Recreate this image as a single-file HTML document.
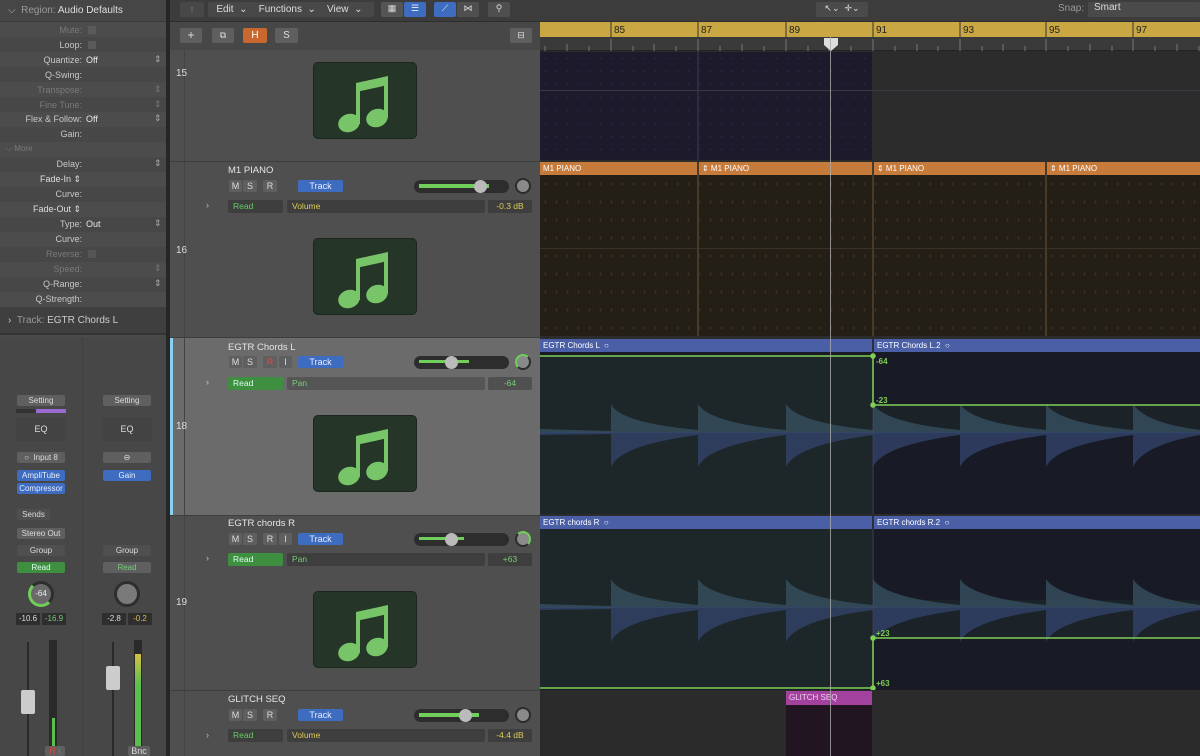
<!DOCTYPE html><html><head><meta charset="utf-8"><style>
*{margin:0;padding:0;box-sizing:border-box}
html,body{width:1200px;height:756px;overflow:hidden}
body{background:#4d4d4d;font-family:"Liberation Sans",sans-serif;font-size:9px;color:#ddd;position:relative}
.a{position:absolute}
.lbl{position:absolute;right:1118px;text-align:right;white-space:nowrap;color:#c8c8c8}
.dim{color:#7a7a7a}
.val{position:absolute;left:86px;color:#e8e8e8}
.btn{position:absolute;background:#5f5f5f;border-radius:2px;color:#ddd;text-align:center;font-size:9px;line-height:12px}
.bl{background:#3d6cc0;color:#e8eefc}
.gr{background:#3f8f41;color:#dfe}
.dd{position:absolute;background:#3e3e3e;border-radius:2px;line-height:13px;font-size:8.5px;padding-left:5px}
.dd.gr{background:#3f8f41;color:#dfe}
.nm{position:absolute;left:228px;font-size:9.5px;color:#e6e6e6}
.icon{position:absolute;left:313px;width:104px;height:77px;background:#253527;border-radius:5px;border:1px solid #1c261d}
.tn{position:absolute;left:176px;font-size:10px;color:#ddd}
.sl{position:absolute;left:414px;width:95px;height:13px;background:#2d2d2d;border-radius:7px}
.kn{position:absolute;left:515px;width:16px;height:16px;border-radius:50%;background:#8a8a8a;border:2px solid #2c2c2c}
.rh{position:absolute;height:13px;font-size:8px;line-height:13px;padding-left:3px;white-space:nowrap;overflow:hidden}
</style></head><body>
<div class="a" style="left:0;top:0;width:167px;height:337px;background:#4a4a4a"></div>
<div class="a" style="left:0;top:0;width:167px;height:22px;background:#464646;border-bottom:1px solid #3a3a3a"></div>
<div class="a" style="left:8px;top:5px;font-size:10px;color:#bbb">⌵ &nbsp;<span style="color:#999">Region:</span> <span style="color:#ddd">Audio Defaults</span></div>
<div class="a" style="left:0;top:22px;width:167px;height:285px;background:repeating-linear-gradient(#4c4c4c 0 15px,#474747 15px 30px)"></div>
<div class="lbl dim" style="top:25px">Mute:</div><div class="a" style="left:88px;top:26px;width:8px;height:8px;background:#5a5a5a"></div>
<div class="lbl" style="top:40px">Loop:</div><div class="a" style="left:88px;top:41px;width:8px;height:8px;background:#5a5a5a"></div>
<div class="lbl" style="top:55px">Quantize:</div><div class="val" style="top:55px">Off</div>
<div class="lbl" style="top:70px">Q-Swing:</div>
<div class="lbl dim" style="top:85px">Transpose:</div>
<div class="lbl dim" style="top:100px">Fine Tune:</div>
<div class="lbl" style="top:114px">Flex &amp; Follow:</div><div class="val" style="top:114px">Off</div>
<div class="lbl" style="top:129px">Gain:</div>
<div class="a dim" style="left:6px;top:144px;font-size:8px">⌵ More</div>
<div class="lbl" style="top:159px">Delay:</div>
<div class="a" style="left:40px;top:174px">Fade-In ⇕</div>
<div class="lbl" style="top:189px">Curve:</div>
<div class="a" style="left:33px;top:204px">Fade-Out ⇕</div>
<div class="lbl" style="top:219px">Type:</div><div class="val" style="top:219px">Out</div>
<div class="lbl" style="top:234px">Curve:</div>
<div class="lbl dim" style="top:249px">Reverse:</div><div class="a" style="left:88px;top:250px;width:8px;height:8px;background:#555"></div>
<div class="lbl dim" style="top:264px">Speed:</div>
<div class="lbl" style="top:279px">Q-Range:</div>
<div class="lbl" style="top:294px">Q-Strength:</div>
<div class="a" style="left:154px;top:54px;color:#aaa">⇕</div><div class="a" style="left:154px;top:84px;color:#777">⇕</div><div class="a" style="left:154px;top:99px;color:#777">⇕</div><div class="a" style="left:154px;top:113px;color:#aaa">⇕</div><div class="a" style="left:154px;top:158px;color:#aaa">⇕</div><div class="a" style="left:154px;top:218px;color:#aaa">⇕</div><div class="a" style="left:154px;top:263px;color:#777">⇕</div><div class="a" style="left:154px;top:278px;color:#aaa">⇕</div>
<div class="a" style="left:0;top:307px;width:167px;height:28px;background:#3f3f3f;border-bottom:2px solid #333"></div>
<div class="a" style="left:8px;top:315px;font-size:10px;color:#ccc">›&nbsp;&nbsp;<span style="color:#999">Track:</span> EGTR Chords L</div>
<div class="a" style="left:0;top:337px;width:167px;height:419px;background:#474747"></div>
<div class="a" style="left:82px;top:337px;width:1px;height:419px;background:#414141"></div>
<div class="btn" style="left:17px;top:395px;width:48px;height:11px;line-height:11px;font-size:8px">Setting</div>
<div class="btn" style="left:103px;top:395px;width:48px;height:11px;line-height:11px;font-size:8px">Setting</div>
<div class="a" style="left:16px;top:409px;width:50px;height:4px;background:#333"><div style="margin-left:20px;height:4px;background:#9a6ad0"></div></div>
<div class="btn" style="left:16px;top:417px;width:50px;height:24px;line-height:24px;background:#434343">EQ</div>
<div class="btn" style="left:102px;top:417px;width:50px;height:24px;line-height:24px;background:#434343">EQ</div>
<div class="btn" style="left:17px;top:452px;width:48px;height:11px;line-height:11px;font-size:8px">○ &nbsp;Input 8</div>
<div class="btn" style="left:103px;top:452px;width:48px;height:11px;line-height:11px;font-size:8px">⊖</div>
<div class="btn bl" style="left:17px;top:470px;width:48px;height:11px;line-height:11px;font-size:8px">AmpliTube</div>
<div class="btn bl" style="left:17px;top:483px;width:48px;height:11px;line-height:11px;font-size:8px">Compressor</div>
<div class="btn bl" style="left:103px;top:470px;width:48px;height:11px;line-height:11px;font-size:8px">Gain</div>
<div class="btn" style="left:17px;top:509px;width:33px;height:11px;line-height:11px;font-size:8px;background:#4f4f4f">Sends</div>
<div class="btn" style="left:17px;top:528px;width:48px;height:11px;line-height:11px;font-size:8px">Stereo Out</div>
<div class="btn" style="left:17px;top:545px;width:48px;height:11px;line-height:11px;font-size:8px;background:#4f4f4f">Group</div>
<div class="btn" style="left:103px;top:545px;width:48px;height:11px;line-height:11px;font-size:8px;background:#4f4f4f">Group</div>
<div class="btn gr" style="left:17px;top:562px;width:48px;height:11px;line-height:11px;font-size:8px">Read</div>
<div class="btn" style="left:103px;top:562px;width:48px;height:11px;line-height:11px;font-size:8px;color:#7c7">Read</div>
<div class="a" style="left:28px;top:581px;width:26px;height:26px;border-radius:50%;background:#6a6a6a;border:3px solid #2e2e2e;border-left-color:#6fcf5a;border-bottom-color:#6fcf5a;font-size:8px;line-height:20px;text-align:center;color:#eee">-64</div>
<div class="a" style="left:114px;top:581px;width:26px;height:26px;border-radius:50%;background:#7a7a7a;border:3px solid #2e2e2e"></div>
<div class="a" style="left:16px;top:613px;width:24px;height:12px;background:#2e2e2e;font-size:8px;text-align:center;line-height:12px">-10.6</div>
<div class="a" style="left:42px;top:613px;width:24px;height:12px;background:#2e2e2e;font-size:8px;text-align:center;line-height:12px;color:#7c7">-16.9</div>
<div class="a" style="left:102px;top:613px;width:24px;height:12px;background:#2e2e2e;font-size:8px;text-align:center;line-height:12px">-2.8</div>
<div class="a" style="left:128px;top:613px;width:24px;height:12px;background:#2e2e2e;font-size:8px;text-align:center;line-height:12px;color:#db5">-0.2</div>
<div class="a" style="left:27px;top:642px;width:2px;height:114px;background:#2a2a2a"></div>
<div class="a" style="left:21px;top:690px;width:14px;height:24px;background:#ccc;border-radius:2px"></div>
<div class="a" style="left:49px;top:640px;width:8px;height:116px;background:#2a2a2a"><div style="margin-top:78px;width:3px;margin-left:3px;height:38px;background:#5bbf4e"></div></div>
<div class="a" style="left:112px;top:642px;width:2px;height:114px;background:#2a2a2a"></div>
<div class="a" style="left:106px;top:666px;width:14px;height:24px;background:#ccc;border-radius:2px"></div>
<div class="a" style="left:134px;top:640px;width:8px;height:116px;background:#2a2a2a"><div style="margin-top:14px;margin-left:1px;width:6px;height:102px;background:linear-gradient(#d8c040,#5bbf4e 30%)"></div></div>
<div class="btn" style="left:45px;top:746px;width:20px;height:10px;line-height:10px;color:#d44">R I</div>
<div class="btn" style="left:128px;top:746px;width:22px;height:10px;line-height:10px">Bnc</div>
<div class="a" style="left:166px;top:0;width:4px;height:756px;background:#262626"></div>
<div class="a" style="left:170px;top:0;width:1030px;height:50px;background:#474747"></div>
<div class="a" style="left:170px;top:0;width:1030px;height:22px;background:#3c3c3c;border-bottom:1px solid #2e2e2e"></div>
<div class="btn" style="left:180px;top:2px;width:24px;height:15px;line-height:15px;background:#484848;color:#888">↑</div>
<div class="btn" style="left:208px;top:2px;width:166px;height:15px;line-height:15px;background:#484848;text-align:left;font-size:10px">&nbsp;&nbsp;&nbsp;Edit &nbsp;⌄ &nbsp;&nbsp;&nbsp;Functions &nbsp;⌄ &nbsp;&nbsp;&nbsp;View &nbsp;⌄</div>
<div class="btn" style="left:381px;top:2px;width:22px;height:15px;background:#555">▦</div>
<div class="btn bl" style="left:404px;top:2px;width:22px;height:15px">☰</div>
<div class="btn bl" style="left:434px;top:2px;width:22px;height:15px">⟋</div>
<div class="btn" style="left:457px;top:2px;width:22px;height:15px;background:#4f4f4f">⋈</div>
<div class="btn" style="left:488px;top:2px;width:22px;height:15px;background:#4f4f4f">⚲</div>
<div class="btn" style="left:816px;top:2px;width:52px;height:15px;background:#4a4a4a">↖⌄ &nbsp;✛⌄</div>
<div class="a" style="left:1058px;top:3px;color:#999;font-size:10px">Snap:</div>
<div class="btn" style="left:1088px;top:2px;width:112px;height:15px;background:#4a4a4a;text-align:left;padding-left:6px;font-size:10px">Smart</div>
<div class="btn" style="left:180px;top:28px;width:22px;height:15px;line-height:15px;font-size:12px">+</div>
<div class="btn" style="left:212px;top:28px;width:22px;height:15px;line-height:15px">⧉</div>
<div class="btn" style="left:243px;top:28px;width:24px;height:15px;line-height:15px;background:#c8682e;color:#fff;font-size:10px">H</div>
<div class="btn" style="left:275px;top:28px;width:23px;height:15px;line-height:15px;font-size:10px">S</div>
<div class="btn" style="left:510px;top:28px;width:22px;height:15px;line-height:15px">⊟</div>
<div class="a" style="left:170px;top:50px;width:370px;height:706px;background:#4f4f4f"></div>
<div class="a" style="left:170px;top:338px;width:370px;height:177px;background:#6b6b6b"></div>
<div class="a" style="left:170px;top:338px;width:3px;height:177px;background:#8ad0f0"></div>
<div class="a" style="left:184px;top:50px;width:1px;height:706px;background:#444"></div>
<div class="a" style="left:170px;top:161px;width:370px;height:1px;background:#3e3e3e"></div>
<div class="a" style="left:170px;top:337px;width:370px;height:1px;background:#3e3e3e"></div>
<div class="a" style="left:170px;top:515px;width:370px;height:1px;background:#3e3e3e"></div>
<div class="a" style="left:170px;top:690px;width:370px;height:1px;background:#3e3e3e"></div>
<div class="tn" style="top:68px">15</div><div class="tn" style="top:245px">16</div><div class="tn" style="top:421px">18</div><div class="tn" style="top:597px">19</div>
<svg width="0" height="0" style="position:absolute"><defs><g id="note"><path d="M42 20 L74 13 L74 22 L42 29 Z" fill="#78c468"/><rect x="42" y="21" width="4" height="40" fill="#78c468"/><rect x="70" y="14" width="4" height="41" fill="#78c468"/><ellipse cx="35" cy="60" rx="11" ry="9" transform="rotate(-20 35 60)" fill="#78c468"/><ellipse cx="63" cy="55" rx="11" ry="9" transform="rotate(-20 63 55)" fill="#78c468"/></g></defs></svg>
<div class="icon" style="top:62px"><svg width="104" height="77"><use href="#note"/></svg></div>
<div class="icon" style="top:238px"><svg width="104" height="77"><use href="#note"/></svg></div>
<div class="icon" style="top:415px"><svg width="104" height="77"><use href="#note"/></svg></div>
<div class="icon" style="top:591px"><svg width="104" height="77"><use href="#note"/></svg></div>
<div class="nm" style="top:165px">M1 PIANO</div>
<div class="btn" style="left:229px;top:180px;width:13px;height:12px">M</div><div class="btn" style="left:243px;top:180px;width:14px;height:12px">S</div><div class="btn" style="left:263px;top:180px;width:14px;height:12px">R</div>
<div class="btn bl" style="left:298px;top:180px;width:45px;height:12px">Track</div>
<div class="sl" style="top:180px"><div style="margin:4px 0 0 5px;width:70px;height:4px;background:#6fcf5a"></div><div style="position:absolute;left:60px;top:0;width:13px;height:13px;border-radius:50%;background:#bbb"></div></div>
<div class="kn" style="top:178px"></div>
<div class="a" style="left:206px;top:200px;color:#bbb">›</div>
<div class="dd" style="left:228px;top:200px;width:55px;color:#6c6">Read</div>
<div class="dd" style="left:287px;top:200px;width:198px;color:#dc5">Volume</div>
<div class="dd" style="left:488px;top:200px;width:44px;color:#dc5;text-align:center;padding:0">-0.3 dB</div>
<div class="nm" style="top:342px">EGTR Chords L</div>
<div class="btn" style="left:229px;top:356px;width:13px;height:12px">M</div><div class="btn" style="left:243px;top:356px;width:14px;height:12px">S</div><div class="btn" style="left:263px;top:356px;width:14px;height:12px;color:#e44">R</div><div class="btn" style="left:279px;top:356px;width:13px;height:12px">I</div>
<div class="btn bl" style="left:298px;top:356px;width:45px;height:12px">Track</div>
<div class="sl" style="top:356px"><div style="margin:4px 0 0 5px;width:50px;height:3px;background:#6fcf5a"></div><div style="position:absolute;left:31px;top:0;width:13px;height:13px;border-radius:50%;background:#bbb"></div></div>
<div class="kn" style="top:354px;border-color:#6fcf5a #2c2c2c #2c2c2c #6fcf5a"></div>
<div class="a" style="left:206px;top:377px;color:#ccc">›</div>
<div class="dd gr" style="left:228px;top:377px;width:55px">Read</div>
<div class="dd" style="left:287px;top:377px;width:198px;color:#7c7;background:#555">Pan</div>
<div class="dd" style="left:488px;top:377px;width:44px;color:#7c7;text-align:center;padding:0;background:#505050">-64</div>
<div class="nm" style="top:518px">EGTR chords R</div>
<div class="btn" style="left:229px;top:533px;width:13px;height:12px">M</div><div class="btn" style="left:243px;top:533px;width:14px;height:12px">S</div><div class="btn" style="left:263px;top:533px;width:14px;height:12px">R</div><div class="btn" style="left:279px;top:533px;width:13px;height:12px">I</div>
<div class="btn bl" style="left:298px;top:533px;width:45px;height:12px">Track</div>
<div class="sl" style="top:533px"><div style="margin:4px 0 0 5px;width:45px;height:3px;background:#6fcf5a"></div><div style="position:absolute;left:31px;top:0;width:13px;height:13px;border-radius:50%;background:#bbb"></div></div>
<div class="kn" style="top:531px;border-color:#6fcf5a #6fcf5a #2c2c2c #2c2c2c"></div>
<div class="a" style="left:206px;top:553px;color:#bbb">›</div>
<div class="dd gr" style="left:228px;top:553px;width:55px">Read</div>
<div class="dd" style="left:287px;top:553px;width:198px;color:#7c7">Pan</div>
<div class="dd" style="left:488px;top:553px;width:44px;color:#7c7;text-align:center;padding:0">+63</div>
<div class="nm" style="top:694px">GLITCH SEQ</div>
<div class="btn" style="left:229px;top:709px;width:13px;height:12px">M</div><div class="btn" style="left:243px;top:709px;width:14px;height:12px">S</div><div class="btn" style="left:263px;top:709px;width:14px;height:12px">R</div>
<div class="btn bl" style="left:298px;top:709px;width:45px;height:12px">Track</div>
<div class="sl" style="top:709px"><div style="margin:4px 0 0 5px;width:60px;height:4px;background:#6fcf5a"></div><div style="position:absolute;left:45px;top:0;width:13px;height:13px;border-radius:50%;background:#bbb"></div></div>
<div class="kn" style="top:707px"></div>
<div class="a" style="left:206px;top:730px;color:#bbb">›</div>
<div class="dd" style="left:228px;top:729px;width:55px;color:#6c6">Read</div>
<div class="dd" style="left:287px;top:729px;width:198px;color:#dc5">Volume</div>
<div class="dd" style="left:488px;top:729px;width:44px;color:#dc5;text-align:center;padding:0">-4.4 dB</div>
<div class="a" style="left:540px;top:22px;width:660px;height:734px;background:#2c2c2c"></div>
<div class="a" style="left:540px;top:22px;width:660px;height:15px;background:#c9a844"></div>
<div class="a" style="left:540px;top:37px;width:660px;height:14px;background:#3a3a3a;border-bottom:1px solid #222"></div>
<svg class="a" style="left:540px;top:22px" width="660" height="29">
<g stroke="#333" stroke-width="1">
<line x1="71" y1="0" x2="71" y2="15"/><line x1="158" y1="0" x2="158" y2="15"/><line x1="246" y1="0" x2="246" y2="15"/><line x1="333" y1="0" x2="333" y2="15"/><line x1="420" y1="0" x2="420" y2="15"/><line x1="506" y1="0" x2="506" y2="15"/><line x1="593" y1="0" x2="593" y2="15"/></g>
<g fill="#222" font-size="10" font-family="Liberation Sans"><text x="74" y="11">85</text><text x="161" y="11">87</text><text x="249" y="11">89</text><text x="336" y="11">91</text><text x="423" y="11">93</text><text x="509" y="11">95</text><text x="596" y="11">97</text></g>
<g stroke="#777" stroke-width="1">
<path d="M27 22v7M49 24v5M71 17v12M93 24v5M114 22v7M136 24v5M158 17v12M180 24v5M202 22v7M224 24v5M246 17v12M268 24v5M289 22v7M311 24v5M333 17v12M355 24v5M377 22v7M398 24v5M420 17v12M442 24v5M463 22v7M485 24v5M506 17v12M528 24v5M550 22v7M572 24v5M593 17v12M615 24v5M637 22v7M659 24v5M5 24v5"/></g>
<path d="M284 16h14v7l-7 6l-7-6z" fill="#ddd"/>
</svg>
<div class="a" style="left:540px;top:52px;width:332px;height:108px;background:#1d1a2c"></div>
<div class="a" style="left:697px;top:52px;width:2px;height:108px;background:#2e2a40"></div>
<div class="a" style="left:540px;top:90px;width:660px;height:1px;background:#3a3a44"></div>
<div class="a" style="left:540px;top:52px;width:332px;height:108px;background:radial-gradient(circle,#4a4270 0.6px,transparent 1px) 0 0/11px 13px;opacity:.35"></div>
<div class="a" style="left:540px;top:162px;width:660px;height:174px;background:#231e16"></div>
<div class="a" style="left:540px;top:162px;width:660px;height:13px;background:#c77b3b"></div>
<div class="a" style="left:540px;top:175px;width:660px;height:161px;background:radial-gradient(ellipse,#6b4e2a 0.8px,transparent 1.2px) 0 0/11px 18px;opacity:.35"></div>
<div class="a" style="left:540px;top:248px;width:660px;height:1px;background:#3a3024"></div>
<div class="rh" style="left:540px;top:162px;color:#fff">M1 PIANO</div>
<div class="a" style="left:697px;top:162px;width:2px;height:174px;background:#4a3a28"></div><div class="rh" style="left:699px;top:162px;color:#fff">⇕ M1 PIANO</div>
<div class="a" style="left:872px;top:162px;width:2px;height:174px;background:#4a3a28"></div><div class="rh" style="left:874px;top:162px;color:#fff">⇕ M1 PIANO</div>
<div class="a" style="left:1045px;top:162px;width:2px;height:174px;background:#4a3a28"></div><div class="rh" style="left:1047px;top:162px;color:#fff">⇕ M1 PIANO</div>
<div class="a" style="left:540px;top:339px;width:660px;height:175px;background:#181b25"></div>
<div class="a" style="left:540px;top:355px;width:332px;height:159px;background:#1d2729"></div>
<div class="a" style="left:873px;top:405px;width:327px;height:30px;background:#1d2729;opacity:.7"></div>
<div class="a" style="left:540px;top:339px;width:660px;height:13px;background:#4a5fa6"></div>
<div class="rh" style="left:540px;top:339px;color:#fff">EGTR Chords L &nbsp;○</div>
<div class="rh" style="left:874px;top:339px;color:#fff">EGTR Chords L.2 &nbsp;○</div>
<div class="a" style="left:872px;top:339px;width:2px;height:175px;background:#2b2f3e"></div>
<div class="a" style="left:540px;top:516px;width:660px;height:174px;background:#181b25"></div>
<div class="a" style="left:540px;top:529px;width:332px;height:159px;background:#1d2729"></div>
<div class="a" style="left:873px;top:600px;width:327px;height:38px;background:#1d2729;opacity:.7"></div>
<div class="a" style="left:540px;top:516px;width:660px;height:13px;background:#4a5fa6"></div>
<div class="rh" style="left:540px;top:516px;color:#fff">EGTR chords R &nbsp;○</div>
<div class="rh" style="left:874px;top:516px;color:#fff">EGTR chords R.2 &nbsp;○</div>
<div class="a" style="left:872px;top:516px;width:2px;height:174px;background:#2b2f3e"></div>
<svg class="a" style="left:540px;top:339px" width="660" height="351">
<defs><g id="wv"><path d="M0 90 L71 92 L71 65 Q80 84 158 91 L158 65 Q170 84 246 91 L246 65 Q258 84 333 91 L333 65 Q345 84 420 91 L420 65 Q432 84 506 91 L506 65 Q518 84 593 91 L593 65 Q605 84 660 91 L660 94 L0 94 Z" fill="#3a5566" opacity=".7"/><path d="M0 96 L71 95 L71 128 Q80 106 158 96 L158 128 Q168 106 246 96 L246 128 Q256 106 333 96 L333 128 Q343 106 420 96 L420 128 Q430 106 506 96 L506 128 Q516 106 593 96 L593 128 Q603 106 660 96 L660 93 L0 93 Z" fill="#34456e" opacity=".75"/></g></defs>
<use href="#wv"/>
<g transform="translate(0,175)"><use href="#wv"/></g>
<g stroke="#7fcf55" stroke-width="1.5" fill="#7fcf55"><path d="M0 17 H333 V66 H660" fill="none"/><circle cx="333" cy="17" r="2"/><circle cx="333" cy="66" r="2"/>
<path d="M0 349 H333 V299 H660" fill="none"/><circle cx="333" cy="299" r="2"/><circle cx="333" cy="349" r="2"/></g>
<g fill="#7fcf55" font-size="8" font-family="Liberation Sans" font-weight="bold"><text x="336" y="25">-64</text><text x="336" y="64">-23</text><text x="336" y="297">+23</text><text x="336" y="347">+63</text></g>
</svg>
<div class="a" style="left:540px;top:691px;width:660px;height:65px;background:#2b2b2b"></div>
<div class="a" style="left:786px;top:691px;width:86px;height:65px;background:#201520"></div>
<div class="a" style="left:786px;top:691px;width:86px;height:14px;background:#a2429e"></div>
<div class="rh" style="left:786px;top:691px;color:#f0d0f0">GLITCH SEQ</div>
<div class="a" style="left:830px;top:37px;width:1px;height:719px;background:#aaa;opacity:.8"></div>
</body></html>
